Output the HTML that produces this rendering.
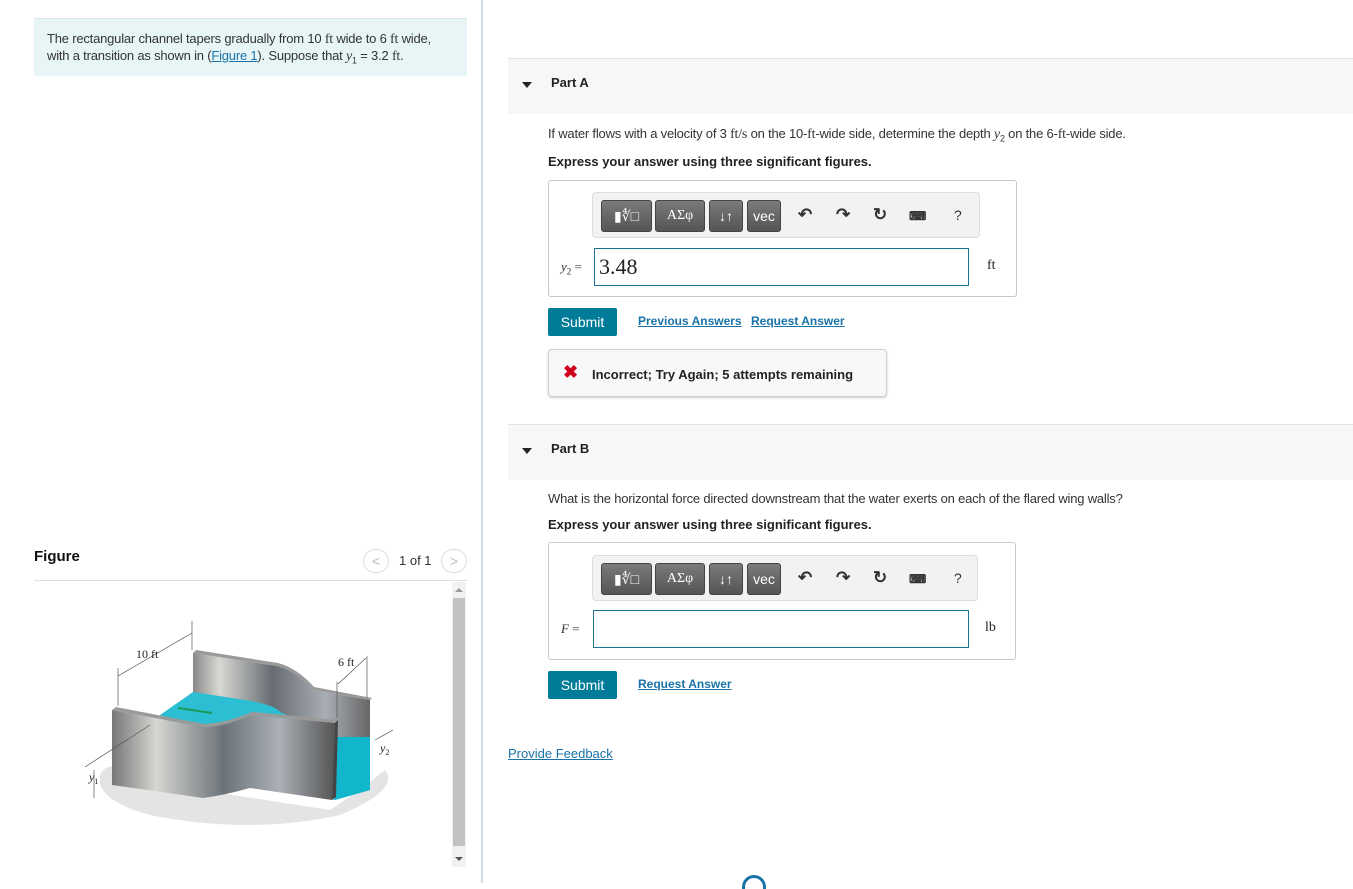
<!DOCTYPE html>
<html><head><meta charset="utf-8">
<style>
*{box-sizing:border-box;margin:0;padding:0}
body{width:1353px;height:883px;position:relative;background:#fff;font-family:"Liberation Sans",Arial,sans-serif;color:#333;overflow:hidden;font-size:13px}
.a{position:absolute}
.serif{font-family:"Liberation Serif","DejaVu Serif",serif}
a{color:#1a73a8}
.band{position:absolute;left:508px;width:845px;height:56px;background:#f7f7f7;border-top:1px solid #e4e4e4}
.band .tri{position:absolute;left:14px;top:23px;width:0;height:0;border-left:5px solid transparent;border-right:5px solid transparent;border-top:6px solid #222}
.band .t{position:absolute;left:43px;top:16px;font-weight:bold;font-size:13px;color:#222}
.box{position:absolute;border:1px solid #c8c8c8;border-radius:3px;background:#fff}
.tb{position:absolute;border:1px solid #ddd;border-radius:4px;background:#f2f2f2}
.btn{position:absolute;top:7px;height:32px;border-radius:3px;background:linear-gradient(#7a7a7a,#555);border:1px solid #444;color:#fff;font-size:14px;text-align:center;line-height:30px}
.ic{position:absolute;top:12px;font-size:17px;color:#333;font-weight:bold}
.inp{position:absolute;border:1px solid #1c7394;background:#fff}
.sub{position:absolute;width:69px;height:28px;background:#007c99;color:#fff;font-size:14px;text-align:center;line-height:28px;border-radius:2px}
.lnk{position:absolute;font-size:12px;font-weight:bold;color:#1a73a8;text-decoration:underline}
.b{font-weight:bold;font-size:13px;color:#222}
</style></head><body>

<div class="a" style="left:481px;top:0;width:2px;height:883px;background:#cfdbe6"></div>

<div class="a" style="left:34px;top:18px;width:433px;height:58px;background:#e7f5f6;border-top:1px solid #dbe6e8"></div>
<div class="a" style="left:47px;top:31px;font-size:13px;line-height:16px;color:#333;letter-spacing:-0.2px">The rectangular channel tapers gradually from 10 <span class="serif" style="font-size:14px">ft</span> wide to 6 <span class="serif" style="font-size:14px">ft</span> wide,<br>with a transition as shown in (<a href="#">Figure 1</a>). Suppose that <i class="serif" style="font-size:14px">y</i><sub style="font-size:9px">1</sub> = 3.2 <span class="serif" style="font-size:14px">ft</span>.</div>

<div class="a" style="left:34px;top:548px;font-weight:bold;font-size:15px;color:#111">Figure</div>
<div class="a" style="left:363px;top:549px;width:26px;height:24px;border:1px solid #ddd;border-radius:12px;color:#bbb;text-align:center;line-height:22px;font-size:14px">&lt;</div>
<div class="a" style="left:399px;top:553px;font-size:13px;color:#333">1 of 1</div>
<div class="a" style="left:441px;top:549px;width:26px;height:24px;border:1px solid #ddd;border-radius:12px;color:#bbb;text-align:center;line-height:22px;font-size:14px">&gt;</div>
<div class="a" style="left:34px;top:580px;width:433px;height:1px;background:#ddd"></div>
<div class="a" style="left:452px;top:582px;width:14px;height:285px;background:#f1f1f1"></div>
<div class="a" style="left:453px;top:598px;width:12px;height:248px;background:#c1c1c1"></div>
<div class="a" style="left:455px;top:588px;border-left:4px solid transparent;border-right:4px solid transparent;border-bottom:4px solid #999"></div>
<div class="a" style="left:455px;top:857px;border-left:4px solid transparent;border-right:4px solid transparent;border-top:4px solid #555"></div>

<svg class="a" style="left:80px;top:615px" width="320" height="220" viewBox="80 615 320 220">
<defs>
<linearGradient id="g" x1="0" x2="1"><stop offset="0" stop-color="#777"/><stop offset=".2" stop-color="#d6d6d2"/><stop offset=".5" stop-color="#6c7378"/><stop offset=".75" stop-color="#aab0b6"/><stop offset="1" stop-color="#555"/></linearGradient>
<linearGradient id="g2" x1="0" x2="1"><stop offset="0" stop-color="#888"/><stop offset=".15" stop-color="#d8d8d4"/><stop offset=".45" stop-color="#666c72"/><stop offset=".75" stop-color="#a8aeb4"/><stop offset="1" stop-color="#666"/></linearGradient>
</defs>
<path d="M100 775 Q110 750 200 790 L330 810 L360 790 L385 770 Q400 790 340 815 Q250 835 150 815 Q95 800 100 775Z" fill="#e4e4e4"/>
<path d="M193 653 L277 666 Q295 670 313 690 L370 700 L370 775 L193 740Z" fill="url(#g2)"/>
<path d="M193 653 L196 650 L278 663 Q297 668 314 687 L372 698 L370 700 L313 690 Q295 670 277 666Z" fill="#999"/>
<path d="M160 715 L193 692 L245 700 Q275 705 280 712 L335 737 L370 737 L370 790 L335 800 L200 760Z" fill="#2cbfd3"/>
<path d="M335 737 L370 737 L370 790 L335 800Z" fill="#12b6cc"/>
<path d="M112 710 L203 727 Q225 727 250 715 L335 723 L332 800 L250 788 Q225 795 203 798 L112 785Z" fill="url(#g)"/>
<path d="M112 710 L116 707 L204 724 Q226 723 252 712 L338 720 L335 723 L250 715 Q225 727 203 727Z" fill="#9a9a9a"/>
<path d="M335 723 L338 720 L336 797 L332 800Z" fill="#444"/>
<line x1="178" y1="708" x2="212" y2="713" stroke="#1a9a5a" stroke-width="2"/>
<line x1="118" y1="676" x2="192" y2="633" stroke="#555" stroke-width=".7"/>
<line x1="118" y1="668" x2="118" y2="706" stroke="#555" stroke-width=".7"/>
<line x1="192" y1="621" x2="192" y2="650" stroke="#555" stroke-width=".7"/>
<line x1="338" y1="684" x2="366" y2="658" stroke="#555" stroke-width=".7"/>
<line x1="337" y1="682" x2="337" y2="718" stroke="#555" stroke-width=".7"/>
<line x1="367" y1="656" x2="367" y2="698" stroke="#555" stroke-width=".7"/>
<line x1="85" y1="767" x2="150" y2="725" stroke="#555" stroke-width=".7"/>
<line x1="375" y1="740" x2="393" y2="730" stroke="#555" stroke-width=".7"/>
<text x="136" y="658" font-family="Liberation Serif" font-size="12" fill="#222">10 ft</text>
<text x="338" y="666" font-family="Liberation Serif" font-size="12" fill="#222">6 ft</text>
<text x="380" y="752" font-family="Liberation Serif" font-size="12" font-style="italic" fill="#222">y<tspan font-size="8" dy="3" font-style="normal">2</tspan></text>
<text x="89" y="781" font-family="Liberation Serif" font-size="12" font-style="italic" fill="#222">y<tspan font-size="8" dy="3" font-style="normal">1</tspan></text>
<line x1="94" y1="770" x2="94" y2="798" stroke="#555" stroke-width=".7"/>
</svg>

<div class="band" style="top:58px"><div class="tri"></div><div class="t">Part A</div></div>
<div class="a" style="left:548px;top:126px;font-size:13px;letter-spacing:-0.2px">If water flows with a velocity of 3 <span class="serif" style="font-size:14px">ft/s</span> on the 10-<span class="serif" style="font-size:14px">ft</span>-wide side, determine the depth <i class="serif" style="font-size:14px">y</i><sub style="font-size:9px">2</sub> on the 6-<span class="serif" style="font-size:14px">ft</span>-wide side.</div>
<div class="a b" style="left:548px;top:154px">Express your answer using three significant figures.</div>

<div class="box" style="left:548px;top:180px;width:469px;height:117px"></div>
<div class="tb" style="left:592px;top:192px;width:388px;height:46px">
 <div class="btn" style="left:8px;width:51px">▮<span class="serif">∜□</span></div>
 <div class="btn serif" style="left:62px;width:50px">ΑΣφ</div>
 <div class="btn" style="left:116px;width:34px">↓↑</div>
 <div class="btn" style="left:154px;width:34px">vec</div>
 <div class="ic" style="left:205px">↶</div><div class="ic" style="left:243px">↷</div><div class="ic" style="left:280px">↻</div><div class="ic" style="left:316px;font-size:12px;top:16px">⌨</div><div class="ic" style="left:361px;font-size:14px;font-weight:normal;top:14px">?</div>
</div>
<div class="a serif" style="left:561px;top:259px;font-size:13px"><i>y</i><sub style="font-size:9px">2</sub> =</div>
<div class="inp" style="left:594px;top:248px;width:375px;height:38px"><span class="serif" style="position:absolute;left:4px;top:5px;font-size:22px;color:#222">3.48</span></div>
<div class="a serif" style="left:987px;top:258px;font-size:14px;color:#222">ft</div>

<div class="sub" style="left:548px;top:308px">Submit</div>
<div class="lnk" style="left:638px;top:314px">Previous Answers</div>
<div class="lnk" style="left:751px;top:314px">Request Answer</div>
<div class="a" style="left:548px;top:349px;width:339px;height:48px;border:1px solid #d0d0d0;border-radius:4px;background:#f8f8f8;box-shadow:0 1px 2px #ccc"></div>
<div class="a" style="left:563px;top:362px;color:#d0021b;font-size:18px;font-weight:bold">✖</div>
<div class="a b" style="left:592px;top:367px">Incorrect; Try Again; 5 attempts remaining</div>

<div class="band" style="top:424px"><div class="tri"></div><div class="t">Part B</div></div>
<div class="a" style="left:548px;top:491px;letter-spacing:-0.2px">What is the horizontal force directed downstream that the water exerts on each of the flared wing walls?</div>
<div class="a b" style="left:548px;top:517px">Express your answer using three significant figures.</div>

<div class="box" style="left:548px;top:542px;width:468px;height:118px"></div>
<div class="tb" style="left:592px;top:555px;width:386px;height:46px">
 <div class="btn" style="left:8px;width:51px">▮<span class="serif">∜□</span></div>
 <div class="btn serif" style="left:62px;width:50px">ΑΣφ</div>
 <div class="btn" style="left:116px;width:34px">↓↑</div>
 <div class="btn" style="left:154px;width:34px">vec</div>
 <div class="ic" style="left:205px">↶</div><div class="ic" style="left:243px">↷</div><div class="ic" style="left:280px">↻</div><div class="ic" style="left:316px;font-size:12px;top:16px">⌨</div><div class="ic" style="left:361px;font-size:14px;font-weight:normal;top:14px">?</div>
</div>
<div class="a serif" style="left:561px;top:621px;font-size:13px"><i>F</i> =</div>
<div class="inp" style="left:593px;top:610px;width:376px;height:38px"></div>
<div class="a serif" style="left:985px;top:620px;font-size:14px;color:#222">lb</div>

<div class="sub" style="left:548px;top:671px">Submit</div>
<div class="lnk" style="left:638px;top:677px">Request Answer</div>

<div class="a" style="left:508px;top:746px;font-size:13px;color:#1a73a8;text-decoration:underline">Provide Feedback</div>
<div class="a" style="left:742px;top:875px;width:24px;height:14px;border:3px solid #1a73a8;border-radius:12px 12px 0 0;border-bottom:none"></div>
</body></html>
